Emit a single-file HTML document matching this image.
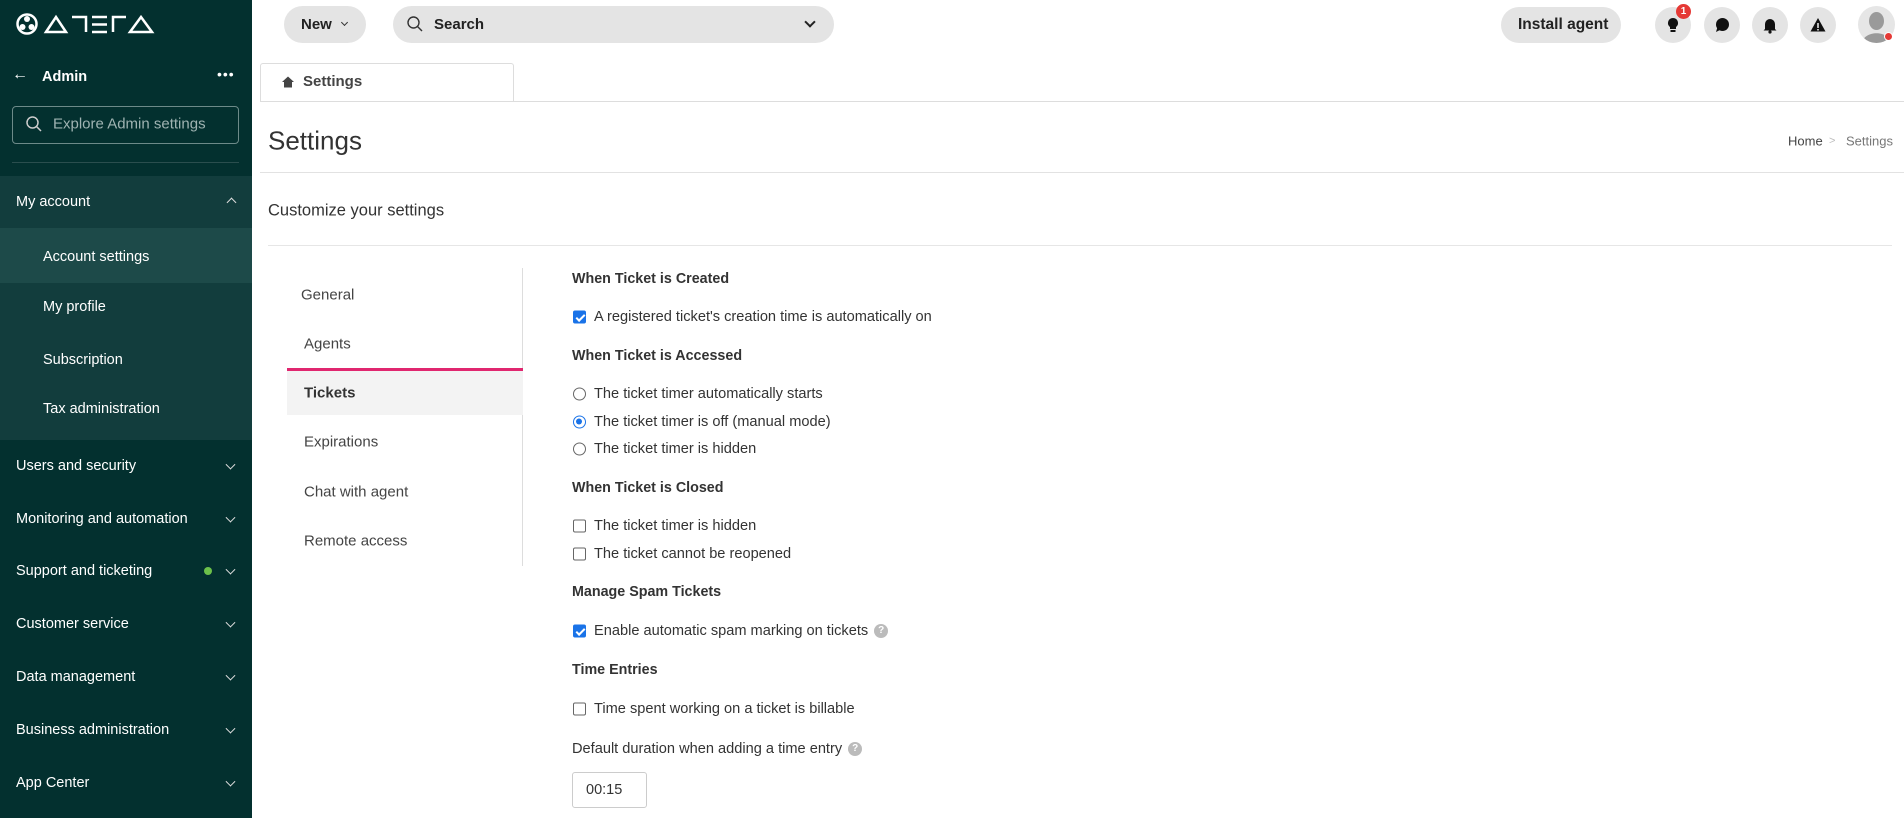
<!DOCTYPE html>
<html><head><meta charset="utf-8"><style>
*{box-sizing:border-box;margin:0;padding:0}
body{width:1904px;height:818px;overflow:hidden;font-family:"Liberation Sans",sans-serif;background:#fff;position:relative;color:#333}
.a{position:absolute}
.sb{left:0;top:0;width:252px;height:818px;background:#03302f}
.sbt{color:#fff;font-size:14.5px;position:absolute;left:16px;transform:translateY(-50%)}
.chev{position:absolute;left:227px;width:7px;height:7px;border-right:1.5px solid #ddd;border-bottom:1.5px solid #ddd;transform:translateY(-70%) rotate(45deg)}
.sub{color:#fff;font-size:14.5px;position:absolute;left:43px;transform:translateY(-50%)}
.pill{background:#e4e4e4;border-radius:20px;position:absolute}
.ic{position:absolute;width:36px;height:36px;border-radius:50%;background:#e4e4e4;top:7px}
.t{position:absolute;font-size:14.6px;color:#333;transform:translateY(-50%);white-space:nowrap}
.h{font-weight:bold;font-size:14.3px}
.tab{position:absolute;left:304px;font-size:15px;color:#444;transform:translateY(-50%)}
.cb{position:absolute;left:573px;width:13px;height:13px;border:1px solid #666;border-radius:2px;transform:translateY(-50%)}
.cbc{background:#1a73e8;border-color:#1a73e8}
.cbc:after{content:"";position:absolute;left:3.5px;top:1px;width:3px;height:7px;border-right:2px solid #fff;border-bottom:2px solid #fff;transform:rotate(45deg)}
.rd{position:absolute;left:573px;width:13px;height:13px;border:1px solid #666;border-radius:50%;transform:translateY(-50%)}
.rdc{border:1.5px solid #1a73e8}
.rdc:after{content:"";position:absolute;left:2px;top:2px;width:6px;height:6px;border-radius:50%;background:#1a73e8}
.lbl{left:594px}
.q{display:inline-block;width:14px;height:14px;border-radius:50%;background:#bbb;color:#fff;font-size:10px;font-weight:bold;text-align:center;line-height:14px;vertical-align:middle;margin-left:6px}
</style></head><body>
<div class="a sb">
  <svg class="a" style="left:16px;top:13px" width="140" height="22" viewBox="0 0 140 22">
    <circle cx="11" cy="11" r="9.5" fill="none" stroke="#fff" stroke-width="2.5"/>
    <circle cx="11" cy="6" r="3" fill="#fff"/><circle cx="6.5" cy="14" r="3" fill="#fff"/><circle cx="15.5" cy="14" r="3" fill="#fff"/>
    <path d="M30 19 L40 4 L50 19 Z" fill="none" stroke="#fff" stroke-width="2.5"/>
    <path d="M56 4 H70 V19" fill="none" stroke="#fff" stroke-width="2.5"/>
    <path d="M76 4 H91 M76 11.5 H91 M76 19 H91" fill="none" stroke="#fff" stroke-width="2.5"/>
    <path d="M97 19 V4 H110" fill="none" stroke="#fff" stroke-width="2.5"/>
    <path d="M114 19 L125 4 L136 19 Z" fill="none" stroke="#fff" stroke-width="2.5"/>
  </svg>
  <div class="a" style="left:12px;top:66px;color:#fff;font-size:16px">&#8592;</div>
  <div class="sbt" style="left:42px;top:77px;font-weight:bold;font-size:14.5px">Admin</div>
  <div class="a" style="left:217px;top:66px;color:#fff;font-size:14px;letter-spacing:1px">•••</div>
  <div class="a" style="left:12px;top:106px;width:227px;height:38px;border:1px solid #6d8a89;border-radius:4px"></div>
  <svg class="a" style="left:25px;top:115px" width="18" height="18" viewBox="0 0 18 18"><circle cx="7.5" cy="7.5" r="5.5" fill="none" stroke="#ccc" stroke-width="1.5"/><path d="M11.5 11.5 L16 16" stroke="#ccc" stroke-width="1.5"/></svg>
  <div class="sbt" style="left:53px;top:124px;color:#9fb3b2;font-size:15px">Explore Admin settings</div>
  <div class="a" style="left:12px;top:162px;width:227px;height:1px;background:#2a4e4e"></div>
  <div class="a" style="left:0;top:176px;width:252px;height:264px;background:#123d3d"></div>
  <div class="a" style="left:0;top:228px;width:252px;height:55px;background:#1d4a49"></div>
  <div class="sbt" style="top:202px">My account</div>
  <div class="a" style="left:228px;top:199px;width:7px;height:7px;border-left:1.5px solid #ddd;border-top:1.5px solid #ddd;transform:rotate(45deg)"></div>
  <div class="sub" style="top:257px">Account settings</div>
  <div class="sub" style="top:307px">My profile</div>
  <div class="sub" style="top:360px">Subscription</div>
  <div class="sub" style="top:409px">Tax administration</div>
  <div class="sbt" style="top:466px">Users and security</div><div class="chev" style="top:466px"></div>
  <div class="sbt" style="top:519px">Monitoring and automation</div><div class="chev" style="top:519px"></div>
  <div class="sbt" style="top:571px">Support and ticketing</div><div class="chev" style="top:571px"></div>
  <div class="a" style="left:204px;top:567px;width:8px;height:8px;border-radius:50%;background:#6cc04a"></div>
  <div class="sbt" style="top:624px">Customer service</div><div class="chev" style="top:624px"></div>
  <div class="sbt" style="top:677px">Data management</div><div class="chev" style="top:677px"></div>
  <div class="sbt" style="top:730px">Business administration</div><div class="chev" style="top:730px"></div>
  <div class="sbt" style="top:783px">App Center</div><div class="chev" style="top:783px"></div>
</div>

<div class="pill" style="left:284px;top:6px;width:82px;height:37px"></div>
<div class="a" style="left:301px;top:16px;font-size:15px;font-weight:bold;color:#222">New</div>
<div class="a" style="left:342px;top:20px;width:5px;height:5px;border-right:1.3px solid #333;border-bottom:1.3px solid #333;transform:rotate(45deg)"></div>
<div class="pill" style="left:393px;top:6px;width:441px;height:37px"></div>
<svg class="a" style="left:406px;top:15px" width="18" height="18" viewBox="0 0 18 18"><circle cx="7.5" cy="7.5" r="5.5" fill="none" stroke="#333" stroke-width="1.4"/><path d="M11.5 11.5 L16 16" stroke="#333" stroke-width="1.4"/></svg>
<div class="a" style="left:434px;top:16px;font-size:15px;font-weight:bold;color:#222">Search</div>
<div class="a" style="left:806px;top:18px;width:8px;height:8px;border-right:2px solid #222;border-bottom:2px solid #222;transform:rotate(45deg)"></div>
<div class="pill" style="left:1501px;top:7px;width:120px;height:36px"></div>
<div class="a" style="left:1518px;top:16px;font-size:15.5px;font-weight:bold;color:#222">Install agent</div>
<div class="ic" style="left:1655px"><svg width="36" height="36" viewBox="0 0 36 36"><path d="M18 11a5 5 0 0 0-3 9v2h6v-2a5 5 0 0 0-3-9z" fill="#111"/><rect x="15.5" y="23" width="5" height="2" fill="#111"/></svg></div>
<div class="a" style="left:1676px;top:4px;width:15px;height:15px;border-radius:50%;background:#e53935;color:#fff;font-size:10px;font-weight:bold;text-align:center;line-height:15px">1</div>
<div class="ic" style="left:1704px"><svg width="36" height="36" viewBox="0 0 36 36"><circle cx="18.5" cy="17.5" r="6.5" fill="#111"/><path d="M12 25 L13.5 20 L16 23 Z" fill="#111"/></svg></div>
<div class="ic" style="left:1752px"><svg width="36" height="36" viewBox="0 0 36 36"><path d="M13 22 V17 a5 5 0 0 1 10 0 V22 L24.5 23.5 H11.5 Z" fill="#111"/><circle cx="18" cy="25" r="1.6" fill="#111"/></svg></div>
<div class="ic" style="left:1800px"><svg width="36" height="36" viewBox="0 0 36 36"><path d="M18 11 L25.5 24.5 H10.5 Z" fill="#111"/><rect x="17.2" y="16" width="1.6" height="5" fill="#e4e4e4"/><rect x="17.2" y="22" width="1.6" height="1.5" fill="#e4e4e4"/></svg></div>
<div class="a" style="left:1858px;top:6px;width:37px;height:37px;border-radius:50%;background:#e6e6e6;overflow:hidden"><svg width="37" height="37" viewBox="0 0 37 37"><ellipse cx="18.5" cy="15" rx="7.5" ry="9" fill="#9a9a9a"/><path d="M4 37 C6 24 31 24 33 37 Z" fill="#9a9a9a"/></svg></div>
<div class="a" style="left:1884px;top:32px;width:9px;height:9px;border-radius:50%;background:#e53935;border:1px solid #fff"></div>

<div class="a" style="left:260px;top:63px;width:254px;height:39px;border:1px solid #ddd;border-bottom:none;border-radius:3px 3px 0 0;background:#fff"></div>
<svg class="a" style="left:281px;top:75px" width="14" height="14" viewBox="0 0 14 14"><path d="M7 1.5 L13 7 H11 V12.5 H3 V7 H1 Z" fill="#444"/></svg>
<div class="a" style="left:303px;top:73px;font-size:15px;font-weight:bold;color:#444">Settings</div>
<div class="a" style="left:260px;top:101px;width:1644px;height:1px;background:#ddd"></div>

<div class="t" style="left:268px;top:141px;font-size:26px;color:#333">Settings</div>
<div class="t" style="left:1788px;top:141px;font-size:13px;color:#444">Home</div>
<div class="t" style="left:1829px;top:141px;font-size:11px;color:#bbb">&gt;</div>
<div class="t" style="left:1846px;top:141px;font-size:13px;color:#777">Settings</div>
<div class="a" style="left:260px;top:172px;width:1644px;height:1px;background:#e2e2e2"></div>
<div class="t" style="left:268px;top:211px;font-size:16.5px;color:#333">Customize your settings</div>
<div class="a" style="left:268px;top:245px;width:1624px;height:1px;background:#e6e6e6"></div>

<div class="a" style="left:522px;top:268px;width:1px;height:298px;background:#ddd"></div>
<div class="a" style="left:287px;top:370px;width:236px;height:45px;background:#f3f3f3"></div>
<div class="a" style="left:287px;top:368px;width:236px;height:3px;background:#e0266f"></div>
<div class="tab" style="left:301px;top:295px">General</div>
<div class="tab" style="top:344px">Agents</div>
<div class="tab" style="top:393px;font-weight:bold;color:#333">Tickets</div>
<div class="tab" style="top:442px">Expirations</div>
<div class="tab" style="top:492px">Chat with agent</div>
<div class="tab" style="top:541px">Remote access</div>

<div class="t h" style="left:572px;top:279px">When Ticket is Created</div>
<div class="cb cbc" style="top:317px"></div><div class="t lbl" style="top:317px">A registered ticket's creation time is automatically on</div>
<div class="t h" style="left:572px;top:356px">When Ticket is Accessed</div>
<div class="rd" style="top:394px"></div><div class="t lbl" style="top:394px">The ticket timer automatically starts</div>
<div class="rd rdc" style="top:422px"></div><div class="t lbl" style="top:422px">The ticket timer is off (manual mode)</div>
<div class="rd" style="top:449px"></div><div class="t lbl" style="top:449px">The ticket timer is hidden</div>
<div class="t h" style="left:572px;top:488px">When Ticket is Closed</div>
<div class="cb" style="top:526px"></div><div class="t lbl" style="top:526px">The ticket timer is hidden</div>
<div class="cb" style="top:554px"></div><div class="t lbl" style="top:554px">The ticket cannot be reopened</div>
<div class="t h" style="left:572px;top:592px">Manage Spam Tickets</div>
<div class="cb cbc" style="top:631px"></div><div class="t lbl" style="top:631px">Enable automatic spam marking on tickets<span class="q">?</span></div>
<div class="t h" style="left:572px;top:670px">Time Entries</div>
<div class="cb" style="top:709px"></div><div class="t lbl" style="top:709px">Time spent working on a ticket is billable</div>
<div class="t" style="left:572px;top:749px">Default duration when adding a time entry<span class="q">?</span></div>
<div class="a" style="left:572px;top:772px;width:75px;height:36px;border:1px solid #ccc;border-radius:3px"></div>
<div class="t" style="left:586px;top:790px;font-size:14.5px">00:15</div>
</body></html>
